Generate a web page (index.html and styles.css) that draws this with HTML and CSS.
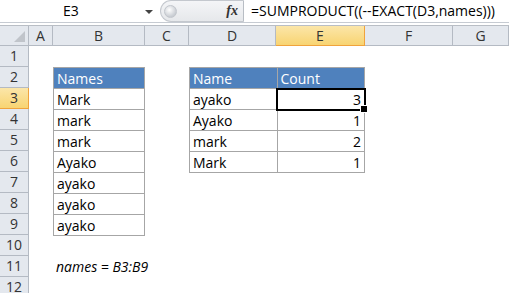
FILE: index.html
```html
<!DOCTYPE html>
<html lang="en">
<head>
<meta charset="utf-8">
<title>EXACT count</title>
<link rel="stylesheet" href="styles.css">
</head>
<body>
<div class="fbar">
  <div class="namebox">E3<span class="caret"></span></div>
  <div class="fxzone"><span class="knob"></span><span class="fx">fx</span></div>
  <div class="formula">=SUMPRODUCT((--EXACT(D3,names)))</div>
</div>
<div class="sheet">
  <!-- column headers -->
  <div class="corner"><span class="tri"></span></div>
  <div class="ch">A</div>
  <div class="ch">B</div>
  <div class="ch">C</div>
  <div class="ch">D</div>
  <div class="ch on">E</div>
  <div class="ch">F</div>
  <div class="ch">G</div>

  <!-- row headers -->
  <div class="rh">1</div>
  <div class="rh">2</div>
  <div class="rh on">3</div>
  <div class="rh">4</div>
  <div class="rh">5</div>
  <div class="rh">6</div>
  <div class="rh">7</div>
  <div class="rh">8</div>
  <div class="rh">9</div>
  <div class="rh">10</div>
  <div class="rh">11</div>
  <div class="rh">12</div>

  <table class="tbl names">
    <tr><th>Names</th></tr>
    <tr><td>Mark</td></tr>
    <tr><td>mark</td></tr>
    <tr><td>mark</td></tr>
    <tr><td>Ayako</td></tr>
    <tr><td>ayako</td></tr>
    <tr><td>ayako</td></tr>
    <tr><td>ayako</td></tr>
  </table>

  <table class="tbl counts">
    <tr><th>Name</th><th>Count</th></tr>
    <tr><td>ayako</td><td class="num sel">3</td></tr>
    <tr><td>Ayako</td><td class="num">1</td></tr>
    <tr><td>mark</td><td class="num">2</td></tr>
    <tr><td>Mark</td><td class="num">1</td></tr>
  </table>

  <div class="note">names = B3:B9</div>
</div>
</body>
</html>
```

FILE: styles.css
```css
*{box-sizing:border-box}
body{margin:0;background:#fff;font-family:"Open Sans",Arial,sans-serif;font-size:14px;color:#000;overflow:hidden}

/* formula bar */
.fbar{display:flex;height:23px;border-bottom:1px solid #c6cbd2}
.namebox{width:160px;position:relative;text-align:center;line-height:22px;font-size:14px;padding-right:18px}
.caret{position:absolute;right:7px;top:10px;border-left:4px solid transparent;border-right:4px solid transparent;border-top:4px solid #444}
.fxzone{width:84px;display:flex;align-items:center;justify-content:space-between;background:linear-gradient(#f4f5f7,#e6e8eb);border-radius:11px 0 0 11px;border:1px solid #c4c8ce;border-right:1px solid #b8bdc4;padding:0 5px 0 3px;height:22px}
.knob{width:13px;height:13px;border-radius:50%;background:radial-gradient(circle at 40% 35%,#fff,#c9cdd3 70%);border:1px solid #c2c6cc}
.fx{font-family:"Liberation Serif",serif;font-style:italic;font-weight:bold;font-size:14px;color:#333}
.formula{flex:1;padding-left:7px;line-height:22px;white-space:nowrap;font-size:14px}

.sheet{display:grid;grid-template-columns:29px 24px 92px 44px 87px 89px 88px 56px;grid-template-rows:20px repeat(12,21px);margin-top:2px;border-top:1px solid #b9bec5}

/* headers */
.corner,.ch,.rh{background:#e4e8ee;color:#333;border-right:1px solid #b4bac3;border-bottom:1px solid #b4bac3;text-align:center}
.ch{line-height:19px}
.rh{grid-column:1;line-height:20px}
.corner{position:relative}
.tri{position:absolute;right:3px;bottom:3px;border-left:11px solid transparent;border-bottom:11px solid #c0c4ca}
.ch.on,.rh.on{background:linear-gradient(#fbe6a9,#f8d472);border-color:#f0a33c;color:#333}

/* data tables */
.tbl{border-collapse:collapse;table-layout:fixed;width:100%;height:100%;margin:0}
.tbl th,.tbl td{border:1px solid #a6a6a6;height:21px;padding:0 3px;text-align:left;font-weight:normal;white-space:nowrap;line-height:19px}
.tbl th{background:#4f81bd;color:#fff}
.tbl th+th{border-left-color:#b7c4d6}
.names{grid-column:3;grid-row:3/11}
.counts{grid-column:5/7;grid-row:3/8}
.num{text-align:right !important}
.sel{position:relative;outline:2px solid #000;outline-offset:-1px}
.sel::after{content:"";position:absolute;right:-4px;bottom:-4px;width:6px;height:6px;background:#000;border:1px solid #fff}

.note{grid-column:3/6;grid-row:12;font-style:italic;padding-left:3px;line-height:21px}
```
